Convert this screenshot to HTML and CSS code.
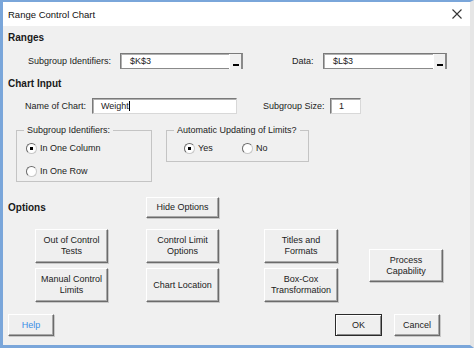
FILE: index.html
```html
<!DOCTYPE html>
<html lang="en">
<head>
    <meta charset="UTF-8">
    <title>Range Control Chart</title>
    <link rel="stylesheet" href="styles.css">
</head>
<body>
    <div id="window">
        <div id="titlebar">
            <span class="title">Range Control Chart</span>
            <svg class="close" width="10" height="10" viewBox="0 0 10 10">
                <path d="M0.5 0.5 L9.5 9.5 M9.5 0.5 L0.5 9.5" stroke="#333" stroke-width="1.1" fill="none"/>
            </svg>
        </div>
        <div id="content">
            <div class="heading" id="ranges">Ranges</div>
            <div class="row" id="rangerow">
                <label class="lbl subid">Subgroup Identifiers:</label>
                <div class="field reffield wide1">
                    <span class="val">$K$3</span>
                    <span class="refbtn"><i></i></span>
                </div>
                <label class="lbl datalbl">Data:</label>
                <div class="field reffield wide2">
                    <span class="val">$L$3</span>
                    <span class="refbtn"><i></i></span>
                </div>
            </div>

            <div class="heading" id="chartinput">Chart Input</div>
            <div class="row" id="namerow">
                <label class="lbl namelbl">Name of Chart:</label>
                <div class="field namefield"><span class="val">Weight</span><span class="caret"></span></div>
                <label class="lbl sizelbl">Subgroup Size:</label>
                <div class="field sizefield"><span class="val">1</span></div>
            </div>

            <div class="row" id="groups">
                <div class="group grp1">
                    <span class="legend">Subgroup Identifiers:</span>
                    <div class="radio on">In One Column</div>
                    <div class="radio">In One Row</div>
                </div>
                <div class="group grp2">
                    <span class="legend">Automatic Updating of Limits?</span>
                    <div class="radios">
                        <div class="radio on">Yes</div>
                        <div class="radio">No</div>
                    </div>
                </div>
            </div>

            <div id="options">
                <div class="heading optlbl">Options</div>
                <button class="btn hide">Hide Options</button>
                <button class="btn c1 r1">Out of Control<br>Tests</button>
                <button class="btn c2 r1">Control Limit<br>Options</button>
                <button class="btn c3 r1">Titles and<br>Formats</button>
                <button class="btn c1 r2">Manual Control<br>Limits</button>
                <button class="btn c2 r2">Chart Location</button>
                <button class="btn c3 r2">Box-Cox<br>Transformation</button>
                <div class="pcwrap"><button class="btn pc">Process<br>Capability</button></div>
            </div>

            <div class="row" id="bottom">
                <button class="btn help">Help</button>
                <button class="btn ok">OK</button>
                <button class="btn cancel">Cancel</button>
            </div>
        </div>
    </div>
</body>
</html>
```

FILE: styles.css
```css
:root{
    --face: #f0f0f0;
    --frame: #7aa6da;
    --shadow: #6b6b6b;
}
*{
    margin: 0;
    padding: 0;
    box-sizing: border-box;
}
body{
    width: 474px;
    height: 348px;
    overflow: hidden;
    font-family: "Liberation Sans", Arial, sans-serif;
    font-size: 9px;
    color: #222;
    background: var(--face);
}
#window{
    width: 474px;
    height: 348px;
    display: flex;
    flex-direction: column;
    border-top: 2px solid var(--frame);
    border-left: 3px solid var(--frame);
    border-bottom: 3px solid var(--frame);
    border-right: 4px solid #e6e6e6;
}
#titlebar{
    height: 24px;
    background: #fff;
    display: flex;
    align-items: center;
    justify-content: space-between;
    padding: 0 8px 0 5px;
}
#titlebar .title{
    font-size: 9.5px;
    color: #111;
}
#content{
    flex: 1;
    padding-left: 5px;
    background: var(--face);
}
.heading{
    font-weight: bold;
    font-size: 10px;
    height: 14px;
    line-height: 14px;
    color: #1a1a1a;
}
#ranges{ margin-top: 5px; }
.row{
    display: flex;
    align-items: center;
}
.lbl{
    white-space: nowrap;
}
#rangerow{
    margin-top: 8px;
    height: 16px;
}
.subid{ margin-left: 20px; width: 92px; }
.datalbl{ margin-left: 49px; width: 31px; }
.field{
    height: 16px;
    background: #fff;
    border-top: 1px solid #7a7a7a;
    border-left: 1px solid #7a7a7a;
    border-right: 1px solid #d8d8d8;
    border-bottom: 1px solid #d8d8d8;
    box-shadow: inset 1px 1px 0 #b0b0b0;
    display: flex;
    align-items: center;
    padding-left: 9px;
}
.reffield{
    border-right: 2px solid #8a8a8a;
    border-bottom: 1px solid #8a8a8a;
}
.wide1{ width: 123px; }
.wide2{ width: 124px; }
.refbtn{
    margin-left: auto;
    width: 12px;
    height: 15px;
    background: var(--face);
    border-left: 1px solid #fff;
    display: flex;
    align-items: flex-end;
    justify-content: center;
    padding-bottom: 3px;
}
.refbtn i{
    width: 6px;
    height: 2px;
    background: #000;
}
#chartinput{ margin-top: 8px; }
#namerow{
    margin-top: 7px;
    height: 16px;
}
.namelbl{ margin-left: 17px; width: 67px; }
.namefield{ width: 145px; padding-left: 8px; }
.caret{
    width: 1px;
    height: 10px;
    background: #000;
}
.sizelbl{ margin-left: 26px; width: 67px; }
.sizefield{ width: 31px; padding-left: 8px; }
#groups{
    margin-top: 16px;
    align-items: flex-start;
}
.group{
    border: 1px solid #c4c4c4;
    position: relative;
}
.legend{
    position: absolute;
    top: -6px;
    left: 7px;
    background: var(--face);
    padding: 0 3px;
    line-height: 11px;
    white-space: nowrap;
}
.grp1{
    margin-left: 8px;
    width: 136px;
    height: 52px;
    padding: 11px 0 0 9px;
}
.grp2{
    margin-left: 14px;
    width: 143px;
    height: 32px;
    padding: 11px 0 0 17px;
}
.radios{
    display: flex;
}
.radios .radio{ width: 58px; }
.radio{
    display: flex;
    align-items: center;
    height: 12px;
    margin-bottom: 11px;
    white-space: nowrap;
}
.radio::before{
    content: "";
    width: 9px;
    height: 9px;
    margin-right: 3px;
    border-radius: 50%;
    background: #fff;
    border: 1px solid #c8c8c8;
    border-left-color: #6a6a6a;
    border-top-color: #6a6a6a;
}
.radio.on::before{
    background: radial-gradient(circle, #000 0 1.6px, #fff 2px);
}
#options{
    margin-top: 15px;
    display: grid;
    grid-template-columns: 27px 73px 38px 73px 45px 74px 31px 74px;
    grid-template-rows: 21px 11px 34px 5px 34px;
}
.optlbl{
    grid-column: 1 / 4;
    grid-row: 1;
    align-self: center;
}
.btn{
    font-family: "Liberation Sans", Arial, sans-serif;
    font-size: 9px;
    line-height: 11px;
    color: #222;
    background: #efefef;
    border-top: 1px solid #fff;
    border-left: 1px solid #fff;
    border-right: 1px solid var(--shadow);
    border-bottom: 1px solid var(--shadow);
    box-shadow: inset -1px -1px 0 #a8a8a8, 1px 1px 0 #c8c8c8;
}
.hide{ grid-column: 4; grid-row: 1; }
.c1{ grid-column: 2; }
.c2{ grid-column: 4; }
.c3{ grid-column: 6; }
.r1{ grid-row: 3; }
.r2{ grid-row: 5; }
.pcwrap{
    grid-column: 8;
    grid-row: 3 / 6;
    display: flex;
    align-items: center;
}
.pc{
    width: 74px;
    height: 33px;
}
#bottom{
    margin-top: 12px;
    height: 22px;
    align-items: stretch;
}
.help{
    width: 46px;
    color: #3a8ee6;
}
.ok{
    margin-left: 281px;
    width: 47px;
    border: 1px solid #2a2a2a;
    box-shadow: inset 1px 1px 0 #fff, inset -1px -1px 0 #8a8a8a;
}
.cancel{
    margin-left: 12px;
    width: 46px;
}
```
